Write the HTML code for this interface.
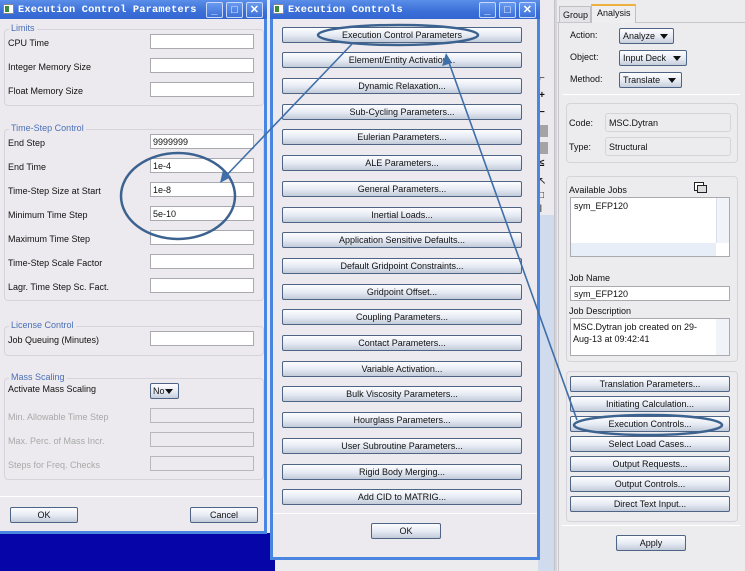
<!DOCTYPE html>
<html><head><meta charset="utf-8"><style>
*{box-sizing:border-box;margin:0;padding:0}
body{width:745px;height:571px;position:relative;overflow:hidden;background:#ecebee;font-family:"Liberation Sans",sans-serif;font-size:9px;color:#111}
.abs{position:absolute}
.title{position:absolute;left:0;right:0;top:0;height:19px;background:linear-gradient(#5a8ee8,#3b6fd8 60%,#3466d2);color:#fff;font-family:"Liberation Mono",monospace;font-weight:bold;font-size:10.3px;padding:4px 0 0 18px;letter-spacing:.2px}
.ticon{position:absolute;left:3px;top:4px;width:11px;height:10px;background:#fff;border:1px solid #888}
.ticon:after{content:"";position:absolute;left:1px;top:1px;width:4px;height:6px;background:#3a8a3a}
.tb{position:absolute;top:2px;width:17px;height:16px;border:1px solid #c8d8f8;border-radius:2px;background:linear-gradient(#6a9af0,#3c70d8);color:#fff;font-size:11px;text-align:center;line-height:14px;font-family:"Liberation Sans",sans-serif}
.win{position:absolute;background:#eceaee;border:3px solid #4a86e0;border-top:none}
.in{position:absolute;height:15px;background:#fff;border:1px solid #a9a9b0}
.in.dis{background:#eceaee;border-color:#b8b8bc}
.lab{position:absolute;font-size:9px}
.dis-l{color:#a8a8a8}
.grp{position:absolute;border:1px solid #d6d4da;border-radius:4px}
.leg{position:absolute;color:#4a6fb8;font-size:9px;background:#eceaee;padding:0 2px}
.btn{position:absolute;height:16px;border:1px solid #4e6485;border-radius:2px;background:linear-gradient(#fdfdff,#e4e9f2 55%,#c3cbd9);text-align:center;font-size:9px;line-height:14px;color:#111}
.dd{position:absolute;height:16px;border:1px solid #4e6485;border-radius:2px;background:linear-gradient(#fdfdff,#e3e8f1 60%,#c6cedb);font-size:9px;line-height:14px;padding-left:3px}
.dd:after{content:"";position:absolute;right:5px;top:5px;border-left:4px solid transparent;border-right:4px solid transparent;border-top:5px solid #111}
.sep{position:absolute;height:1px;background:#c9c7cc;border-bottom:1px solid #fff}
</style></head><body>

<div class="abs" style="left:0;top:533px;width:275px;height:38px;background:#0505a8"></div>

<div class="abs" style="left:538px;top:0;width:17px;height:571px;background:#eceaee;border-right:1px solid #c4c4c8"></div>
<div class="abs" style="left:538px;top:215px;width:16px;height:356px;background:#d0dbee"></div>
<div class="abs" style="left:539px;top:70px;font-size:10px;line-height:17px;font-weight:bold">⌐<br>+<br>−<br>=<br>&lt;<br>≤</div>
<div class="abs" style="left:540px;top:125px;width:8px;height:12px;background:#a4a4a4"></div>
<div class="abs" style="left:540px;top:142px;width:8px;height:12px;background:#a4a4a4"></div>
<div class="abs" style="left:538px;top:175px;font-size:10px;line-height:14px">↖<br>□<br>ǁ</div>
<div class="abs" style="left:555px;top:0;width:2px;height:571px;background:#d6d6da"></div>

<div class="abs" style="left:557px;top:22px;width:188px;height:1px;background:#c8c6cc"></div>
<div class="abs" style="left:559px;top:6px;width:32px;height:16px;border:1px solid #c0c0c4;border-bottom:none;background:#e4e4e8;font-size:9px;padding:3px 0 0 3px">Group</div>
<div class="abs" style="left:591px;top:4px;width:45px;height:19px;border:1px solid #c0c0c4;border-top:2px solid #f0b040;border-bottom:none;background:#eeedf0;font-size:9px;padding:2px 0 0 5px">Analysis</div>
<div class="abs" style="left:558px;top:23px;width:1px;height:548px;background:#c8c6cc"></div>
<div class="lab" style="left:570px;top:30px">Action:</div>
<div class="dd" style="left:619px;top:28px;width:55px">Analyze</div>
<div class="lab" style="left:570px;top:52px">Object:</div>
<div class="dd" style="left:619px;top:50px;width:68px">Input Deck</div>
<div class="lab" style="left:570px;top:74px">Method:</div>
<div class="dd" style="left:619px;top:72px;width:63px">Translate</div>
<div class="sep" style="left:562px;top:94px;width:178px"></div>
<div class="grp" style="left:566px;top:103px;width:172px;height:60px"></div>
<div class="lab" style="left:569px;top:118px">Code:</div>
<div class="grp" style="left:605px;top:113px;width:126px;height:19px;border-radius:3px"></div>
<div class="lab" style="left:609px;top:118px">MSC.Dytran</div>
<div class="lab" style="left:569px;top:142px">Type:</div>
<div class="grp" style="left:605px;top:137px;width:126px;height:19px;border-radius:3px"></div>
<div class="lab" style="left:609px;top:142px">Structural</div>
<div class="grp" style="left:566px;top:176px;width:172px;height:186px"></div>
<div class="lab" style="left:569px;top:185px">Available Jobs</div>
<div class="abs" style="left:694px;top:182px;width:10px;height:9px;border:1px solid #222;background:#fff"></div>
<div class="abs" style="left:697px;top:185px;width:10px;height:8px;border:1px solid #222;background:#ddd"></div>
<div class="abs" style="left:570px;top:197px;width:160px;height:60px;background:#fff;border:1px solid #a9a9b0"></div>
<div class="lab" style="left:574px;top:201px">sym_EFP120</div>
<div class="abs" style="left:716px;top:198px;width:13px;height:45px;background:#f0f3f8;border-left:1px solid #dde"></div>
<div class="abs" style="left:571px;top:243px;width:145px;height:13px;background:#e8eef8"></div>
<div class="lab" style="left:569px;top:273px">Job Name</div>
<div class="in" style="left:570px;top:286px;width:160px"></div>
<div class="lab" style="left:574px;top:289px">sym_EFP120</div>
<div class="lab" style="left:569px;top:306px">Job Description</div>
<div class="abs" style="left:570px;top:318px;width:160px;height:38px;background:#fff;border:1px solid #a9a9b0"></div>
<div class="lab" style="left:573px;top:321px;line-height:12px">MSC.Dytran job created on 29-<br>Aug-13 at 09:42:41</div>
<div class="abs" style="left:716px;top:319px;width:13px;height:36px;background:#f0f3f8"></div>
<div class="grp" style="left:566px;top:371px;width:172px;height:151px"></div>
<div class="btn" style="left:570px;top:376px;width:160px">Translation Parameters...</div>
<div class="btn" style="left:570px;top:396px;width:160px">Initiating Calculation...</div>
<div class="btn" style="left:570px;top:416px;width:160px">Execution Controls...</div>
<div class="btn" style="left:570px;top:436px;width:160px">Select Load Cases...</div>
<div class="btn" style="left:570px;top:456px;width:160px">Output Requests...</div>
<div class="btn" style="left:570px;top:476px;width:160px">Output Controls...</div>
<div class="btn" style="left:570px;top:496px;width:160px">Direct Text Input...</div>
<div class="sep" style="left:562px;top:525px;width:178px"></div>
<div class="btn" style="left:616px;top:535px;width:70px">Apply</div>

<div class="win" style="left:270px;top:0;width:270px;height:560px">
<div class="title" style="left:-3px;right:-3px">Execution Controls<div class="ticon"></div>
<div class="tb" style="right:44px">_</div><div class="tb" style="right:24px">□</div><div class="tb" style="right:4px">✕</div></div>
</div>
<div class="btn" style="left:282px;top:27px;width:240px">Execution Control Parameters</div>
<div class="btn" style="left:282px;top:52px;width:240px">Element/Entity Activation...</div>
<div class="btn" style="left:282px;top:78px;width:240px">Dynamic Relaxation...</div>
<div class="btn" style="left:282px;top:104px;width:240px">Sub-Cycling Parameters...</div>
<div class="btn" style="left:282px;top:129px;width:240px">Eulerian Parameters...</div>
<div class="btn" style="left:282px;top:155px;width:240px">ALE Parameters...</div>
<div class="btn" style="left:282px;top:181px;width:240px">General  Parameters...</div>
<div class="btn" style="left:282px;top:207px;width:240px">Inertial Loads...</div>
<div class="btn" style="left:282px;top:232px;width:240px">Application Sensitive Defaults...</div>
<div class="btn" style="left:282px;top:258px;width:240px">Default Gridpoint Constraints...</div>
<div class="btn" style="left:282px;top:284px;width:240px">Gridpoint Offset...</div>
<div class="btn" style="left:282px;top:309px;width:240px">Coupling Parameters...</div>
<div class="btn" style="left:282px;top:335px;width:240px">Contact Parameters...</div>
<div class="btn" style="left:282px;top:361px;width:240px">Variable Activation...</div>
<div class="btn" style="left:282px;top:386px;width:240px">Bulk Viscosity Parameters...</div>
<div class="btn" style="left:282px;top:412px;width:240px">Hourglass Parameters...</div>
<div class="btn" style="left:282px;top:438px;width:240px">User Subroutine Parameters...</div>
<div class="btn" style="left:282px;top:464px;width:240px">Rigid Body Merging...</div>
<div class="btn" style="left:282px;top:489px;width:240px">Add CID to MATRIG...</div>
<div class="sep" style="left:273px;top:513px;width:264px"></div>
<div class="btn" style="left:371px;top:523px;width:70px">OK</div>

<div class="win" style="left:0;top:0;width:267px;height:534px;border-left:none">
<div class="title" style="right:-3px">Execution Control Parameters<div class="ticon"></div>
<div class="tb" style="right:44px">_</div><div class="tb" style="right:24px">□</div><div class="tb" style="right:4px">✕</div></div>
</div>
<div class="grp" style="left:4px;top:29px;width:260px;height:77px"></div><div class="leg" style="left:9px;top:23px">Limits</div>
<div class="lab" style="left:8px;top:38px">CPU Time</div><div class="in" style="left:150px;top:34px;width:104px"></div>
<div class="lab" style="left:8px;top:62px">Integer Memory Size</div><div class="in" style="left:150px;top:58px;width:104px"></div>
<div class="lab" style="left:8px;top:86px">Float Memory Size</div><div class="in" style="left:150px;top:82px;width:104px"></div>
<div class="grp" style="left:4px;top:129px;width:260px;height:172px"></div><div class="leg" style="left:9px;top:123px">Time-Step Control</div>
<div class="lab" style="left:8px;top:138px">End Step</div><div class="in" style="left:150px;top:134px;width:104px"></div><div class="lab" style="left:153px;top:137px">9999999</div>
<div class="lab" style="left:8px;top:162px">End Time</div><div class="in" style="left:150px;top:158px;width:104px"></div><div class="lab" style="left:153px;top:161px">1e-4</div>
<div class="lab" style="left:8px;top:186px">Time-Step Size at Start</div><div class="in" style="left:150px;top:182px;width:104px"></div><div class="lab" style="left:153px;top:185px">1e-8</div>
<div class="lab" style="left:8px;top:210px">Minimum Time Step</div><div class="in" style="left:150px;top:206px;width:104px"></div><div class="lab" style="left:153px;top:209px">5e-10</div>
<div class="lab" style="left:8px;top:234px">Maximum Time Step</div><div class="in" style="left:150px;top:230px;width:104px"></div>
<div class="lab" style="left:8px;top:258px">Time-Step Scale Factor</div><div class="in" style="left:150px;top:254px;width:104px"></div>
<div class="lab" style="left:8px;top:282px">Lagr. Time Step Sc. Fact.</div><div class="in" style="left:150px;top:278px;width:104px"></div>
<div class="grp" style="left:4px;top:326px;width:260px;height:30px"></div><div class="leg" style="left:9px;top:320px">License Control</div>
<div class="lab" style="left:8px;top:335px">Job Queuing (Minutes)</div><div class="in" style="left:150px;top:331px;width:104px"></div>
<div class="grp" style="left:4px;top:378px;width:260px;height:102px"></div><div class="leg" style="left:9px;top:372px">Mass Scaling</div>
<div class="lab" style="left:8px;top:384px">Activate Mass Scaling</div><div class="dd" style="left:150px;top:383px;width:29px;padding-left:2px">No</div>
<div class="lab dis-l" style="left:8px;top:412px">Min. Allowable Time Step</div><div class="in dis" style="left:150px;top:408px;width:104px"></div>
<div class="lab dis-l" style="left:8px;top:436px">Max. Perc. of Mass Incr.</div><div class="in dis" style="left:150px;top:432px;width:104px"></div>
<div class="lab dis-l" style="left:8px;top:460px">Steps for Freq. Checks</div><div class="in dis" style="left:150px;top:456px;width:104px"></div>
<div class="sep" style="left:0;top:496px;width:264px"></div>
<div class="btn" style="left:10px;top:507px;width:68px">OK</div>
<div class="btn" style="left:190px;top:507px;width:68px">Cancel</div>

<svg class="abs" style="left:0;top:0" width="745" height="571">
<g fill="none" stroke="#3c6290" stroke-width="2.5">
<ellipse cx="178" cy="196" rx="57" ry="43"/>
<ellipse cx="398" cy="35" rx="80" ry="10"/>
<ellipse cx="648" cy="425" rx="74" ry="10"/>
</g>
<g stroke="#3f6fa8" stroke-width="1.6" fill="none">
<line x1="352" y1="44" x2="222" y2="180"/>
<line x1="577" y1="420" x2="447" y2="57"/>
</g>
<polygon points="220,183 223,170 231,177" fill="#3f6fa8"/>
<polygon points="446,53 442,66 452,63" fill="#3f6fa8"/>
</svg>
</body></html>
